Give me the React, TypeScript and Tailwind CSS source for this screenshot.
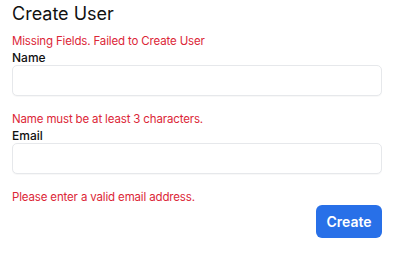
import React from 'react';

function Field({ label, error, type }: { label: string; error: string; type: string }) {
  return (
    <div>
      <label className="block mt-[1px] text-[12px] leading-4 font-medium text-[#111]">{label}</label>
      <input
        type={type}
        className="block w-full h-[31px] mt-[-1px] rounded-[5px] border border-[#e6e8eb] bg-white px-2 text-[13px] shadow-[0_1px_1px_rgba(0,0,0,0.03)] outline-none"
      />
      <p className="mt-[15px] text-[11.5px] leading-4 tracking-[-0.15px] text-[#dc2637]">{error}</p>
    </div>
  );
}

export default function App() {
  return (
    <div className="w-[400px] h-[256px] bg-white px-3 pt-[2px] font-['Inter',sans-serif] text-[#111]">
      <h1 className="text-[18px] leading-6 font-normal">Create User</h1>
      <p className="mt-[7px] text-[11.5px] leading-4 tracking-[-0.15px] text-[#dc2637]">Missing Fields. Failed to Create User</p>
      <div className="w-[370px]">
        <Field label="Name" error="Name must be at least 3 characters." type="text" />
        <Field label="Email" error="Please enter a valid email address." type="email" />
        <div className="flex justify-end">
          <button className="h-[33px] w-[66px] rounded-[6px] bg-[#2870e8] text-[14px] font-semibold text-white">
            Create
          </button>
        </div>
      </div>
    </div>
  );
}
